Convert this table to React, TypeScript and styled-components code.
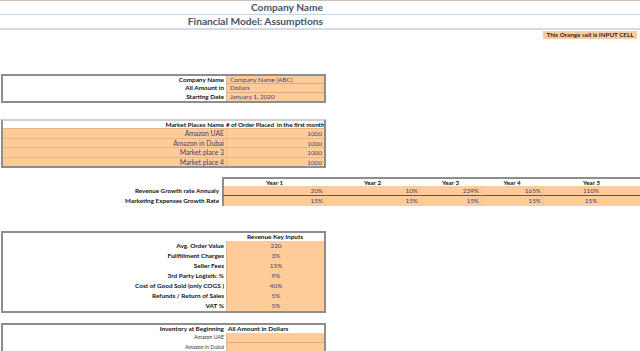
import React from 'react'
import styled, { createGlobalStyle } from 'styled-components'

const INPUT_FILL = '#FFCC99'
const INPUT_TEXT = '#3F3F76'
const HEAD_TEXT = '#44546A'
const FONT = "Lato, 'Open Sans', 'Liberation Sans', sans-serif"

const companyRows = [
  { label: 'Company Name', value: 'Company Name (ABC)' },
  { label: 'All Amount in', value: 'Dollars' },
  { label: 'Starting Date', value: 'January 1, 2020' },
]

const marketRows = [
  { name: 'Amazon UAE', orders: 1000 },
  { name: 'Amazon in Dubai', orders: 1000 },
  { name: 'Market place 3', orders: 1000 },
  { name: 'Market place 4', orders: 1000 },
]

const years = ['Year 1', 'Year 2', 'Year 3', 'Year 4', 'Year 5']

const growthRows = [
  { label: 'Revenue Growth rate Annualy', values: ['20%', '10%', '239%', '165%', '110%'] },
  { label: 'Marketing Expenses Growth Rate', values: ['15%', '15%', '15%', '15%', '15%'] },
]

const revenueInputs = [
  { label: 'Avg. Order Value', value: '220' },
  { label: 'Fullfillment Charges', value: '3%' },
  { label: 'Seller Fees', value: '15%' },
  { label: '3rd Party Logistic %', value: '9%' },
  { label: 'Cost of Good Sold (only COGS )', value: '40%' },
  { label: 'Refunds / Return of Sales', value: '5%' },
  { label: 'VAT %', value: '5%' },
]

const inventoryRows = ['Amazon UAE', 'Amazon in Dubai']

const GlobalStyle = createGlobalStyle`
  html, body {
    margin: 0;
    padding: 0;
    background: #fff;
    overflow: hidden;
  }
  body {
    font-family: ${FONT};
    color: #000;
  }
`

const Sheet = styled.div`
  width: 640px;
  height: 351px;
  overflow: hidden;
  display: flex;
  flex-direction: column;
  border-top: 1px solid #c4c4c4;
`

const TitleRow = styled.div<{ $h: number; $size: number; $rule: string }>`
  height: ${(p) => p.$h}px;
  line-height: ${(p) => p.$h}px;
  border-bottom: ${(p) => p.$rule};
  padding-right: 317px;
  text-align: right;
  font-size: ${(p) => p.$size}px;
  font-weight: 700;
  color: ${HEAD_TEXT};
  white-space: nowrap;
`

const NoteRow = styled.div`
  display: flex;
  justify-content: flex-end;
  padding: 1px 3px 0 0;
`

const Note = styled.div`
  width: 94px;
  height: 8px;
  line-height: 8px;
  background: ${INPUT_FILL};
  color: #262640;
  font-size: 6.3px;
  font-weight: 700;
  text-align: center;
  white-space: nowrap;
`

const Box = styled.section<{ $top: number; $topColor?: string }>`
  margin-top: ${(p) => p.$top}px;
  margin-left: 1px;
  width: 325px;
  box-sizing: border-box;
  border: 2px solid #8e8e8e;
  border-top-color: ${(p) => p.$topColor || '#8e8e8e'};
  display: grid;
  grid-template-columns: 223px 98px;
  flex-shrink: 0;
`

const Label = styled.div<{ $h: number; $bold?: boolean; $size?: number; $color?: string; $fill?: boolean; $line?: boolean }>`
  height: ${(p) => p.$h}px;
  line-height: ${(p) => p.$h}px;
  box-sizing: border-box;
  padding-right: 2px;
  text-align: right;
  font-size: ${(p) => p.$size || 6.4}px;
  font-weight: ${(p) => (p.$bold ? 700 : 400)};
  color: ${(p) => p.$color || '#111'};
  background: ${(p) => (p.$fill ? INPUT_FILL : 'transparent')};
  border-top: ${(p) => (p.$line ? '1px solid #e7b48a' : 'none')};
  white-space: nowrap;
  overflow: hidden;
`

const Input = styled.div<{ $h: number; $align?: string; $size?: number; $bottom?: boolean; $top?: boolean }>`
  height: ${(p) => p.$h}px;
  line-height: ${(p) => p.$h}px;
  box-sizing: border-box;
  padding: 0 2px 0 3px;
  background: ${INPUT_FILL};
  color: ${INPUT_TEXT};
  text-align: ${(p) => p.$align || 'left'};
  font-size: ${(p) => p.$size || 6.4}px;
  border-bottom: ${(p) => (p.$bottom ? '1px solid #d6ad88' : 'none')};
  border-top: ${(p) => (p.$top ? '1px solid #e7b48a' : 'none')};
  border-left: 1px solid #e8b88c;
  white-space: nowrap;
  overflow: hidden;
`

const HeadCell = styled.div<{ $h: number; $align?: string; $size?: number; $tight?: boolean }>`
  height: ${(p) => p.$h}px;
  line-height: ${(p) => p.$h}px;
  padding: 0 ${(p) => (p.$tight ? 0 : 2)}px;
  text-align: ${(p) => p.$align || 'center'};
  font-size: ${(p) => p.$size || 6.4}px;
  letter-spacing: ${(p) => (p.$tight ? '-0.1px' : '0')};
  font-weight: 700;
  color: #111;
  white-space: pre;
  overflow: hidden;
`

const GrowthGrid = styled.section`
  margin-top: 9px;
  display: grid;
  grid-template-columns: 222px 103px 95px 61px 62px 97px;
  flex-shrink: 0;
`

const YearHead = styled.div<{ $first?: boolean }>`
  height: 7px;
  line-height: 7px;
  border-top: 2px solid #8e8e8e;
  border-left: ${(p) => (p.$first ? '2px solid #8e8e8e' : 'none')};
  text-align: center;
  font-size: 6.2px;
  font-weight: 700;
  color: #111;
`

const GrowthLabel = styled.div<{ $h: number }>`
  height: ${(p) => p.$h}px;
  line-height: ${(p) => p.$h}px;
  padding-right: 3px;
  text-align: right;
  font-size: 6.3px;
  font-weight: 700;
  color: #111;
  white-space: nowrap;
`

const GrowthCell = styled.div<{ $h: number; $center?: boolean; $sep?: boolean; $first?: boolean }>`
  height: ${(p) => p.$h}px;
  line-height: ${(p) => p.$h}px;
  padding-right: 2px;
  background: ${INPUT_FILL};
  color: ${INPUT_TEXT};
  text-align: ${(p) => (p.$center ? 'center' : 'right')};
  font-size: 6.4px;
  border-bottom: ${(p) => (p.$sep ? '1px solid #6f5238' : 'none')};
  border-left: ${(p) => (p.$first ? '2px solid #8e8e8e' : '1px solid #f3c092')};
`

const Spacer = styled.div``

export default function App() {
  return (
    <>
      <GlobalStyle />
      <Sheet>
        <TitleRow $h={13} $size={10.2} $rule="1px solid #bdd7ee">
          Company Name
        </TitleRow>
        <TitleRow $h={13} $size={10.2} $rule="2px solid #d5dbe3">
          Financial Model: Assumptions
        </TitleRow>
        <NoteRow>
          <Note>This Orange cell is INPUT CELL</Note>
        </NoteRow>

        <Box $top={35}>
          {companyRows.map((r, i) => (
            <React.Fragment key={r.label}>
              <Label $h={8.3} $bold>
                {r.label}
              </Label>
              <Input $h={8.3} $bottom={i < companyRows.length - 1}>
                {r.value}
              </Input>
            </React.Fragment>
          ))}
        </Box>

        <Box $top={16} $topColor="#cfcfcf">
          <HeadCell $h={7.5} $align="right">
            Market Places Name
          </HeadCell>
          <HeadCell $h={7.5} $align="right" $size={6.4} $tight>
            {'# of Order Placed  in the first month'}
          </HeadCell>
          {marketRows.map((r) => (
            <React.Fragment key={r.name}>
              <Label $h={9.5} $fill $line $size={6.8} $color={INPUT_TEXT}>
                {r.name}
              </Label>
              <Input $h={9.5} $align="right" $top>
                {r.orders}
              </Input>
            </React.Fragment>
          ))}
        </Box>

        <GrowthGrid>
          <Spacer />
          {years.map((y, i) => (
            <YearHead key={y} $first={i === 0}>
              {y}
            </YearHead>
          ))}
          {growthRows.map((row, ri) => (
            <React.Fragment key={row.label}>
              <GrowthLabel $h={ri === 0 ? 9 : 10}>{row.label}</GrowthLabel>
              {row.values.map((v, ci) => (
                <GrowthCell key={ci} $h={ri === 0 ? 9 : 10} $sep={ri === 0} $center={ci === 4} $first={ci === 0}>
                  {v}
                </GrowthCell>
              ))}
            </React.Fragment>
          ))}
        </GrowthGrid>

        <Box $top={25}>
          <Spacer />
          <HeadCell $h={8}>Revenue Key Inputs</HeadCell>
          {revenueInputs.map((r) => (
            <React.Fragment key={r.label}>
              <Label $h={10} $bold>
                {r.label}
              </Label>
              <Input $h={10} $align="center">
                {r.value}
              </Input>
            </React.Fragment>
          ))}
        </Box>

        <Box $top={10}>
          <HeadCell $h={8} $align="right">
            Inventory at Beginning
          </HeadCell>
          <HeadCell $h={8} $align="left">
            All Amount in Dollars
          </HeadCell>
          {inventoryRows.map((name) => (
            <React.Fragment key={name}>
              <Label $h={9.5} $size={5.2} $color="#333">
                {name}
              </Label>
              <Input $h={9.5} $bottom />
            </React.Fragment>
          ))}
        </Box>
      </Sheet>
    </>
  )
}
